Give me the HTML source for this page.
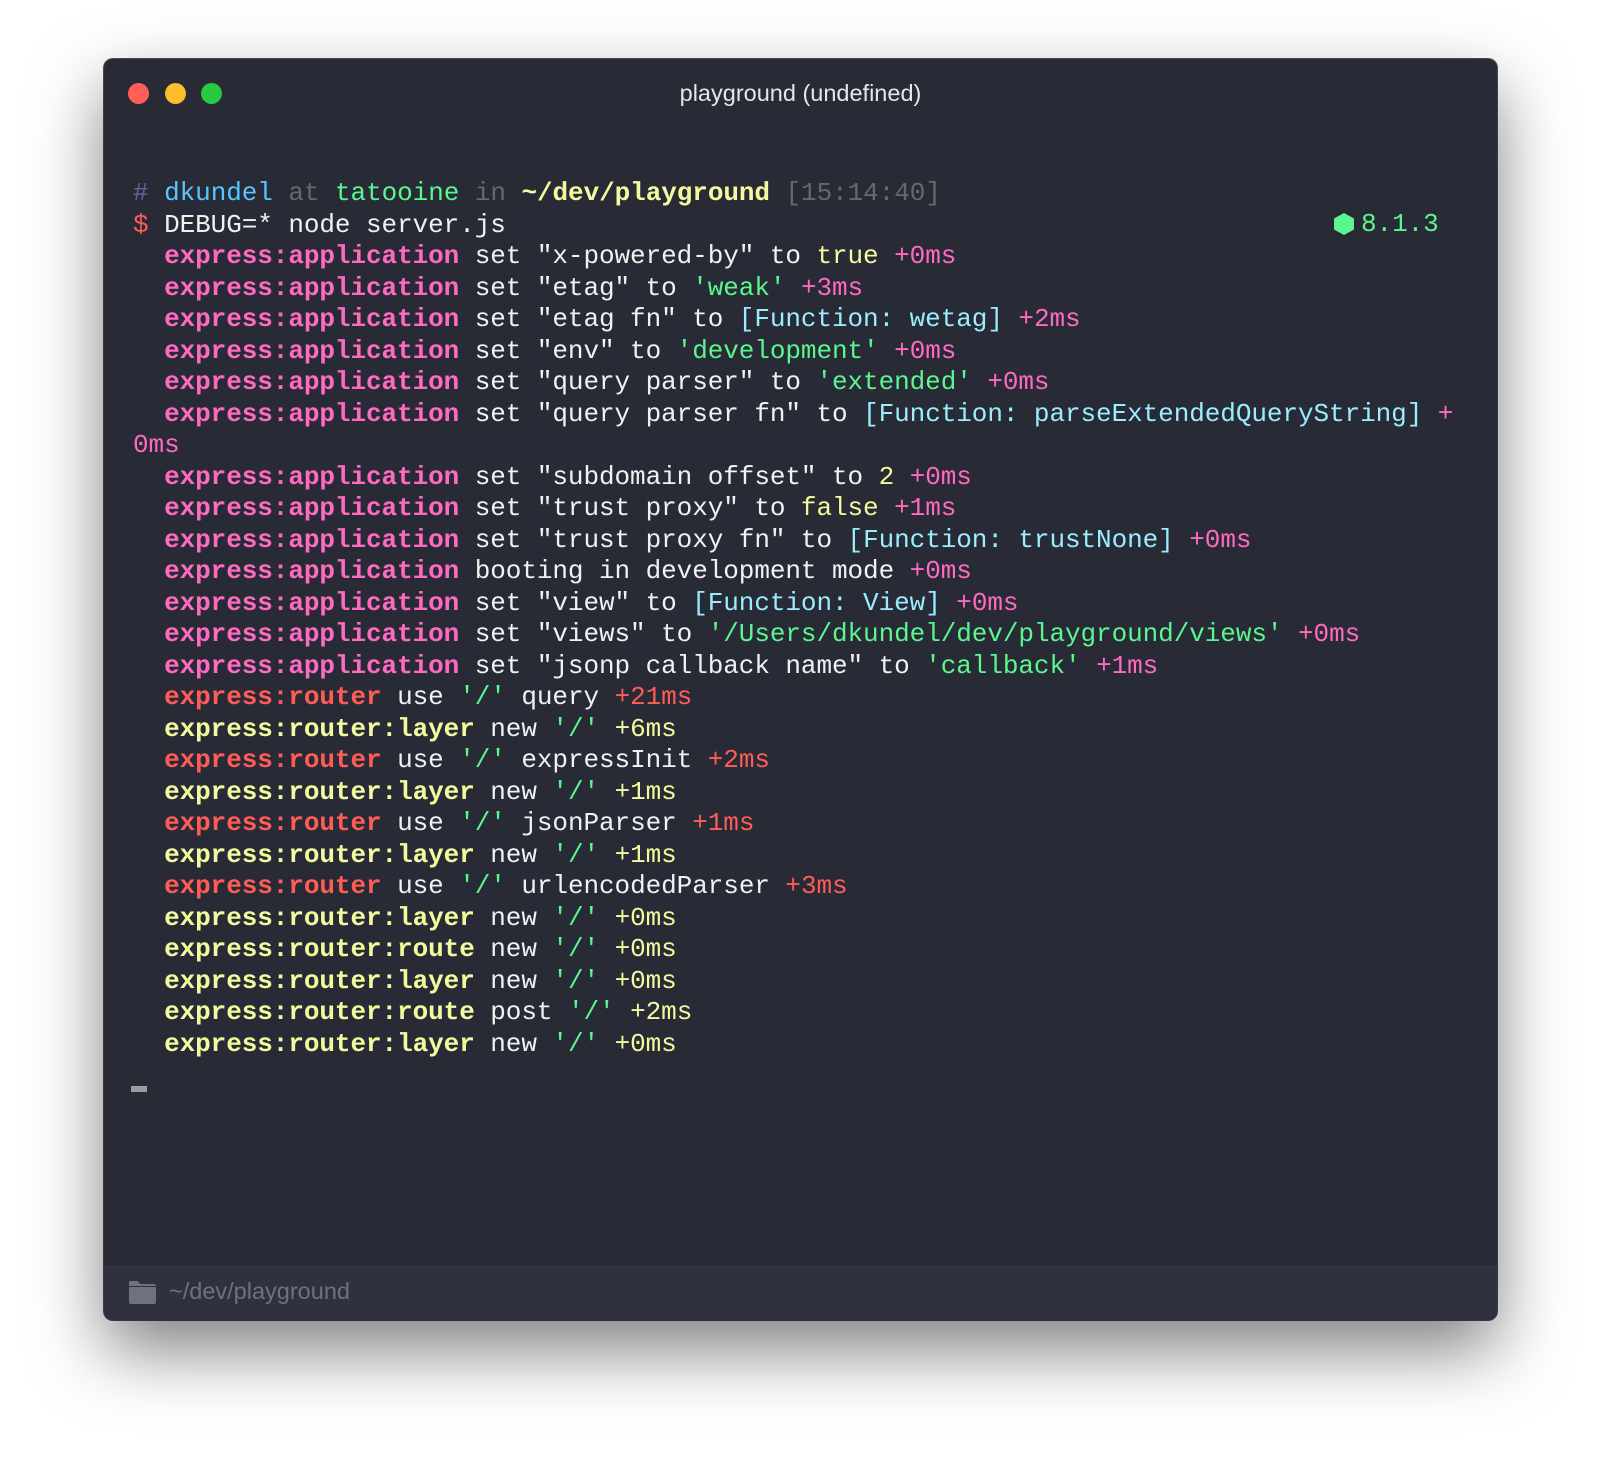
<!DOCTYPE html>
<html><head><meta charset="utf-8"><style>
html,body{margin:0;padding:0;background:#fff;width:1600px;height:1469px;overflow:hidden}
.win{position:absolute;left:104px;top:59px;width:1393px;height:1261px;background:#282a36;border-radius:9px;box-shadow:0 30px 70px rgba(0,0,0,0.5),0 0 0 1px #4a4d5c;overflow:hidden}
.dot{position:absolute;top:24px;width:21px;height:21px;border-radius:50%}
.title{position:absolute;left:0;right:0;top:21px;text-align:center;color:#e6e6e6;font:23.5px "Liberation Sans",sans-serif}
.term{position:absolute;left:29px;top:119px;margin:0;font:26px/31.5px "Liberation Mono",monospace;letter-spacing:-0.07px;color:#f1f1f0;white-space:pre}
b{font-weight:bold}
.m{color:#ff6ac1}.r{color:#ff5c57}.y{color:#f3f99d}.g{color:#5af78e}.c{color:#9aedfe}.b{color:#57c7ff}.gr{color:#686868}.h{color:#5b6a9a}
.status{position:absolute;left:0;right:0;bottom:0;height:55px;background:#2f313e}
.status span{position:absolute;left:65px;top:13px;font:23.5px "Liberation Sans",sans-serif;color:#6f727e}
</style></head><body>
<div class="win">
<div class="dot" style="left:24px;background:#ff5f57"></div>
<div class="dot" style="left:61px;background:#febc2e"></div>
<div class="dot" style="left:97px;background:#28c840"></div>
<div class="title">playground (undefined)</div>
<pre class="term"><span class="h">#</span> <span class="b">dkundel</span> <span class="gr">at</span> <span class="g">tatooine</span> <span class="gr">in</span> <b class="y">~/dev/playground</b> <span class="gr">[15:14:40]</span>
<span class="r">$</span> DEBUG=* node server.js
  <b class="m">express:application</b> set "x-powered-by" to <span class="y">true</span> <span class="m">+0ms</span>
  <b class="m">express:application</b> set "etag" to <span class="g">'weak'</span> <span class="m">+3ms</span>
  <b class="m">express:application</b> set "etag fn" to <span class="c">[Function: wetag]</span> <span class="m">+2ms</span>
  <b class="m">express:application</b> set "env" to <span class="g">'development'</span> <span class="m">+0ms</span>
  <b class="m">express:application</b> set "query parser" to <span class="g">'extended'</span> <span class="m">+0ms</span>
  <b class="m">express:application</b> set "query parser fn" to <span class="c">[Function: parseExtendedQueryString]</span> <span class="m">+</span>
<span class="m">0ms</span>
  <b class="m">express:application</b> set "subdomain offset" to <span class="y">2</span> <span class="m">+0ms</span>
  <b class="m">express:application</b> set "trust proxy" to <span class="y">false</span> <span class="m">+1ms</span>
  <b class="m">express:application</b> set "trust proxy fn" to <span class="c">[Function: trustNone]</span> <span class="m">+0ms</span>
  <b class="m">express:application</b> booting in development mode <span class="m">+0ms</span>
  <b class="m">express:application</b> set "view" to <span class="c">[Function: View]</span> <span class="m">+0ms</span>
  <b class="m">express:application</b> set "views" to <span class="g">'/Users/dkundel/dev/playground/views'</span> <span class="m">+0ms</span>
  <b class="m">express:application</b> set "jsonp callback name" to <span class="g">'callback'</span> <span class="m">+1ms</span>
  <b class="r">express:router</b> use <span class="g">'/'</span> query <span class="r">+21ms</span>
  <b class="y">express:router:layer</b> new <span class="g">'/'</span> <span class="y">+6ms</span>
  <b class="r">express:router</b> use <span class="g">'/'</span> expressInit <span class="r">+2ms</span>
  <b class="y">express:router:layer</b> new <span class="g">'/'</span> <span class="y">+1ms</span>
  <b class="r">express:router</b> use <span class="g">'/'</span> jsonParser <span class="r">+1ms</span>
  <b class="y">express:router:layer</b> new <span class="g">'/'</span> <span class="y">+1ms</span>
  <b class="r">express:router</b> use <span class="g">'/'</span> urlencodedParser <span class="r">+3ms</span>
  <b class="y">express:router:layer</b> new <span class="g">'/'</span> <span class="y">+0ms</span>
  <b class="y">express:router:route</b> new <span class="g">'/'</span> <span class="y">+0ms</span>
  <b class="y">express:router:layer</b> new <span class="g">'/'</span> <span class="y">+0ms</span>
  <b class="y">express:router:route</b> post <span class="g">'/'</span> <span class="y">+2ms</span>
  <b class="y">express:router:layer</b> new <span class="g">'/'</span> <span class="y">+0ms</span></pre>
<div style="position:absolute;left:27px;top:1027px;width:16px;height:6px;background:#9a9ca4"></div>
<svg style="position:absolute;left:1229px;top:153px" width="22" height="24" viewBox="0 0 22 24"><polygon points="11,1 21,6.5 21,17.5 11,23 1,17.5 1,6.5" fill="#5af78e"/></svg>
<div style="position:absolute;left:1257px;top:150px;font:26px 'Liberation Mono',monospace;letter-spacing:-0.07px;color:#5af78e">8.1.3</div>
<div class="status">
<svg style="position:absolute;left:25px;top:16px" width="27" height="23" viewBox="0 0 27 23"><path d="M0 2 Q0 0 2 0 H9 L11 3 H25 Q27 3 27 5 V21 Q27 23 25 23 H2 Q0 23 0 21 Z" fill="#6f727e"/><rect x="0" y="5" width="27" height="1" fill="#2f313e"/></svg>
<span>~/dev/playground</span>
</div>
</div>
</body></html>
